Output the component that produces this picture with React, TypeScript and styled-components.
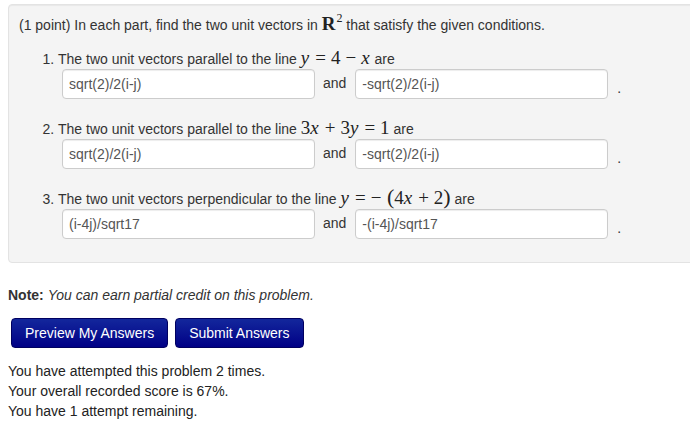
import React from "react";
import styled, { createGlobalStyle } from "styled-components";

const Global = createGlobalStyle`
  html, body { margin: 0; padding: 0; background: #fff; }
  body {
    font-family: "Liberation Sans", Arial, sans-serif;
    font-size: 14px;
    line-height: 20px;
    color: #333;
    overflow: hidden;
  }
`;

const Page = styled.div`
  width: 690px;
  height: 427px;
  overflow: hidden;
  padding: 4px 0 0 8px;
  box-sizing: border-box;
`;

const Problem = styled.div`
  width: 700px;
  box-sizing: border-box;
  background: #f4f4f4;
  border: 1px solid #e3e3e3;
  border-radius: 4px;
  padding: 10px 10px 0 10px;
  box-shadow: inset 0 1px 1px rgba(0, 0, 0, 0.05);
`;

const Intro = styled.p`
  margin: 0 0 14px 0;
`;

const Parts = styled.ol`
  margin: 0;
  padding: 0 0 23px 39px;
`;

const Part = styled.li`
  margin: 0 0 20px 0;
  &:last-child { margin-bottom: 0; }
`;

const AnswerRow = styled.div`
  display: flex;
  align-items: center;
  gap: 9px;
  margin-left: 4px;
`;

const AnswerInput = styled.input`
  width: 253px;
  height: 30px;
  box-sizing: border-box;
  border: 1px solid #ccc;
  border-radius: 4px;
  background: #fff;
  padding: 0 6px;
  font-family: "Liberation Sans", Arial, sans-serif;
  font-size: 14px;
  color: #555;
  box-shadow: inset 0 1px 1px rgba(0, 0, 0, 0.075);
  outline: none;
`;

const Joiner = styled.span`
  color: #333;
  margin: -3px 0 0 -1px;
`;

const Period = styled.span`
  margin-top: 8px;
`;

const Math = styled.span`
  font-family: "Liberation Serif", "Times New Roman", serif;
  font-size: 19px;
  line-height: 0;
  color: #222;
`;

const V = styled.i`
  font-style: italic;
  margin-right: 1px;
`;

const Bold = styled.b`
  font-weight: bold;
`;

const Sup = styled.sup`
  font-size: 12px;
  line-height: 0;
  vertical-align: 8px;
  margin-left: 1px;
`;

const Op = styled.span`
  margin: 0 5px;
`;

const Paren = styled.span`
  font-size: 22px;
  line-height: 0;
`;

const Note = styled.p`
  margin: 22px 0 0 0;
  color: #333;
  em { font-style: italic; }
`;

const Buttons = styled.div`
  display: flex;
  gap: 7px;
  margin: 13px 0 0 3px;
`;

const Button = styled.button`
  height: 30px;
  padding: 0 13px;
  border: 1px solid #000060;
  border-radius: 4px;
  background: linear-gradient(#13279c, #000086);
  color: #fff;
  font-family: "Liberation Sans", Arial, sans-serif;
  font-size: 14px;
  cursor: pointer;
`;

const Status = styled.div`
  margin-top: 13px;
  color: #222;
`;

const Line = styled.div``;

type PartData = { lead: React.ReactNode; a: string; b: string };

const parts: PartData[] = [
  {
    lead: (
      <>
        The two unit vectors parallel to the line{" "}
        <Math>
          <V>y</V><Op>=</Op>4<Op>−</Op><V>x</V>
        </Math>{" "}
        are
      </>
    ),
    a: "sqrt(2)/2(i-j)",
    b: "-sqrt(2)/2(i-j)",
  },
  {
    lead: (
      <>
        The two unit vectors parallel to the line{" "}
        <Math>
          3<V>x</V><Op>+</Op>3<V>y</V><Op>=</Op>1
        </Math>{" "}
        are
      </>
    ),
    a: "sqrt(2)/2(i-j)",
    b: "-sqrt(2)/2(i-j)",
  },
  {
    lead: (
      <>
        The two unit vectors perpendicular to the line{" "}
        <Math>
          <V>y</V><Op>=</Op>−<Paren> (</Paren>4<V>x</V><Op>+</Op>2<Paren>)</Paren>
        </Math>{" "}
        are
      </>
    ),
    a: "(i-4j)/sqrt17",
    b: "-(i-4j)/sqrt17",
  },
];

export default function App() {
  return (
    <>
      <Global />
      <Page>
        <Problem>
          <Intro>
            (1 point) In each part, find the two unit vectors in{" "}
            <Math>
              <Bold>R</Bold>
              <Sup>2</Sup>
            </Math>{" "}
            that satisfy the given conditions.
          </Intro>
          <Parts>
            {parts.map((p, i) => (
              <Part key={i}>
                {p.lead}
                <AnswerRow>
                  <AnswerInput defaultValue={p.a} />
                  <Joiner>and</Joiner>
                  <AnswerInput defaultValue={p.b} />
                  <Period>.</Period>
                </AnswerRow>
              </Part>
            ))}
          </Parts>
        </Problem>
        <Note>
          <b>Note:</b> <em>You can earn partial credit on this problem.</em>
        </Note>
        <Buttons>
          <Button>Preview My Answers</Button>
          <Button>Submit Answers</Button>
        </Buttons>
        <Status>
          <Line>You have attempted this problem 2 times.</Line>
          <Line>Your overall recorded score is 67%.</Line>
          <Line>You have 1 attempt remaining.</Line>
        </Status>
      </Page>
    </>
  );
}
